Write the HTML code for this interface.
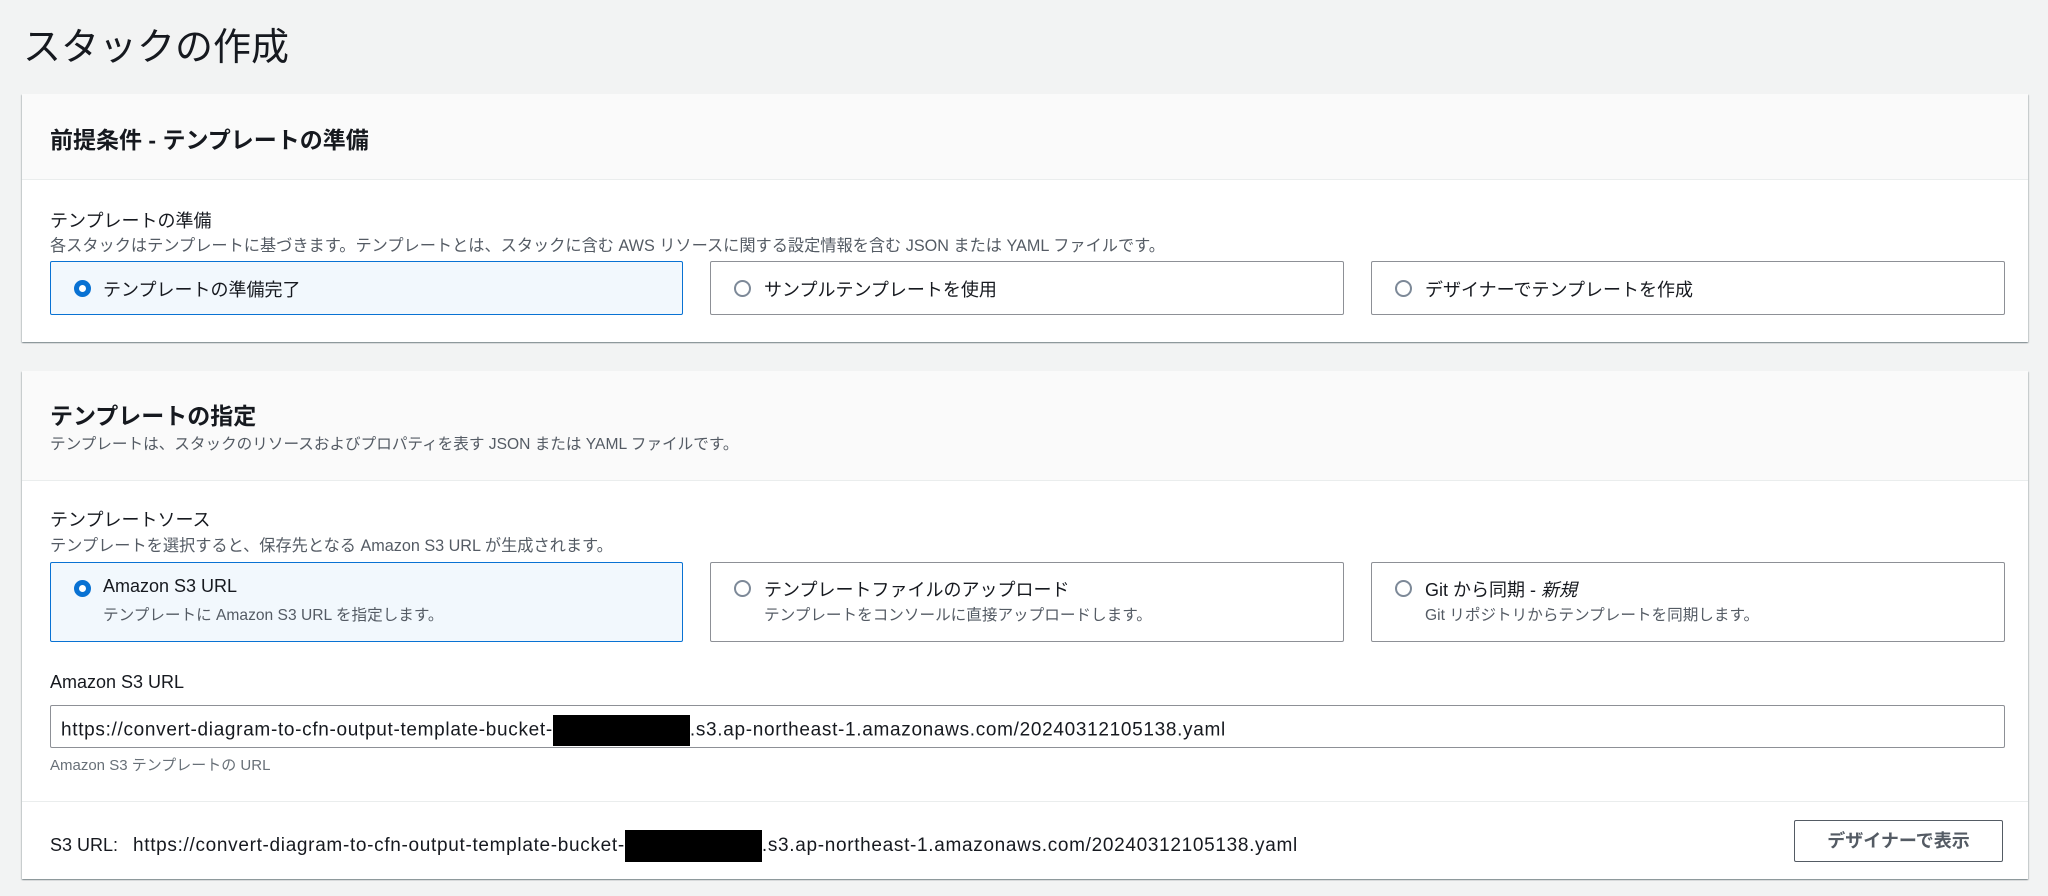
<!DOCTYPE html>
<html><head><meta charset="utf-8">
<style>
*{box-sizing:border-box;margin:0;padding:0}
body{width:2048px;height:896px;background:#f2f3f3;font-family:"Liberation Sans","Noto Sans CJK JP",sans-serif;color:#16191f;position:relative;overflow:hidden}
.a{position:absolute;white-space:nowrap}
.panel{position:absolute;left:22px;width:2006px;background:#fff;box-shadow:0 1px 1px 0 rgba(0,28,36,.3),1px 1px 1px 0 rgba(0,28,36,.15),-1px 1px 1px 0 rgba(0,28,36,.15);}
.hdr{position:absolute;left:0;top:0;width:100%;background:#fafafa;border-bottom:1px solid #eaeded}
.tile{position:absolute;border:1px solid #8d9096;border-radius:2px;background:#fff}
.tile.sel{border-color:#0972d3;background:#f2f8fd}
.rad{position:absolute;width:17px;height:17px;border-radius:50%;border:2px solid #7d8998;background:#fff}
.rad.on{border:5px solid #0972d3}
.t{font-size:18px;color:#16191f}
.s{font-size:16.2px;color:#545b64}
.ts{font-size:15.6px;color:#545b64}
.u{font-size:19px;letter-spacing:0.68px}
.blk{display:inline-block;background:#000;vertical-align:middle;letter-spacing:0}
</style></head><body>
<div class="a" style="left:23px;top:16px;font-size:38px;font-weight:400">スタックの作成</div>

<div class="panel" style="top:94px;height:248px">
  <div class="hdr" style="height:86px"></div>
  <div class="a" style="left:28px;top:27px;font-size:23px;font-weight:700">前提条件 - テンプレートの準備</div>
  <div class="a t" style="left:28px;top:113px">テンプレートの準備</div>
  <div class="a s" style="left:28px;top:138px">各スタックはテンプレートに基づきます。テンプレートとは、スタックに含む AWS リソースに関する設定情報を含む JSON または YAML ファイルです。</div>
</div>
<div class="tile sel" style="left:50px;top:261px;width:633px;height:54px"></div>
<div class="rad on" style="left:74px;top:280px"></div>
<div class="a t" style="left:103px;top:276px">テンプレートの準備完了</div>
<div class="tile" style="left:710px;top:261px;width:634px;height:54px"></div>
<div class="rad" style="left:734px;top:280px"></div>
<div class="a t" style="left:764px;top:276px">サンプルテンプレートを使用</div>
<div class="tile" style="left:1371px;top:261px;width:634px;height:54px"></div>
<div class="rad" style="left:1395px;top:280px"></div>
<div class="a t" style="left:1425px;top:276px">デザイナーでテンプレートを作成</div>

<div class="panel" style="top:371px;height:508px">
  <div class="hdr" style="height:110px"></div>
  <div class="a" style="left:28px;top:26px;font-size:23px;font-weight:700">テンプレートの指定</div>
  <div class="a ts" style="left:28px;top:61px">テンプレートは、スタックのリソースおよびプロパティを表す JSON または YAML ファイルです。</div>
  <div class="a t" style="left:28px;top:135px">テンプレートソース</div>
  <div class="a s" style="left:28px;top:161px">テンプレートを選択すると、保存先となる Amazon S3 URL が生成されます。</div>
  <div class="a t" style="left:28px;top:301px">Amazon S3 URL</div>
  <div class="a" style="left:28px;top:383px;font-size:15px;color:#687078">Amazon S3 テンプレートの URL</div>
  <div style="position:absolute;left:0;top:430px;width:100%;border-top:1px solid #eaeded"></div>
  <div class="a t" style="left:28px;top:464px">S3 URL:</div>
  <div class="a t u" style="left:111px;top:459px">https://convert-diagram-to-cfn-output-template-bucket-<span class="blk" style="width:137px;height:32px"></span>.s3.ap-northeast-1.amazonaws.com/20240312105138.yaml</div>
</div>
<div class="tile sel" style="left:50px;top:562px;width:633px;height:80px"></div>
<div class="rad on" style="left:74px;top:580px"></div>
<div class="a t" style="left:103px;top:576px">Amazon S3 URL</div>
<div class="a ts" style="left:103px;top:603px">テンプレートに Amazon S3 URL を指定します。</div>
<div class="tile" style="left:710px;top:562px;width:634px;height:80px"></div>
<div class="rad" style="left:734px;top:580px"></div>
<div class="a t" style="left:764px;top:576px">テンプレートファイルのアップロード</div>
<div class="a ts" style="left:764px;top:603px">テンプレートをコンソールに直接アップロードします。</div>
<div class="tile" style="left:1371px;top:562px;width:634px;height:80px"></div>
<div class="rad" style="left:1395px;top:580px"></div>
<div class="a t" style="left:1425px;top:576px">Git から同期 - <i>新規</i></div>
<div class="a ts" style="left:1425px;top:603px">Git リポジトリからテンプレートを同期します。</div>

<div style="position:absolute;left:50px;top:705px;width:1955px;height:43px;border:1px solid #8d9096;border-radius:2px;background:#fff"></div>
<div class="a t u" style="left:61px;top:715px">https://convert-diagram-to-cfn-output-template-bucket-<span class="blk" style="width:137px;height:31px"></span>.s3.ap-northeast-1.amazonaws.com/20240312105138.yaml</div>

<div style="position:absolute;left:1794px;top:820px;width:209px;height:42px;border:1px solid #545b64;border-radius:2px;background:#fff;font-size:18px;font-weight:700;color:#545b64;text-align:center;line-height:40px">デザイナーで表示</div>
</body></html>
